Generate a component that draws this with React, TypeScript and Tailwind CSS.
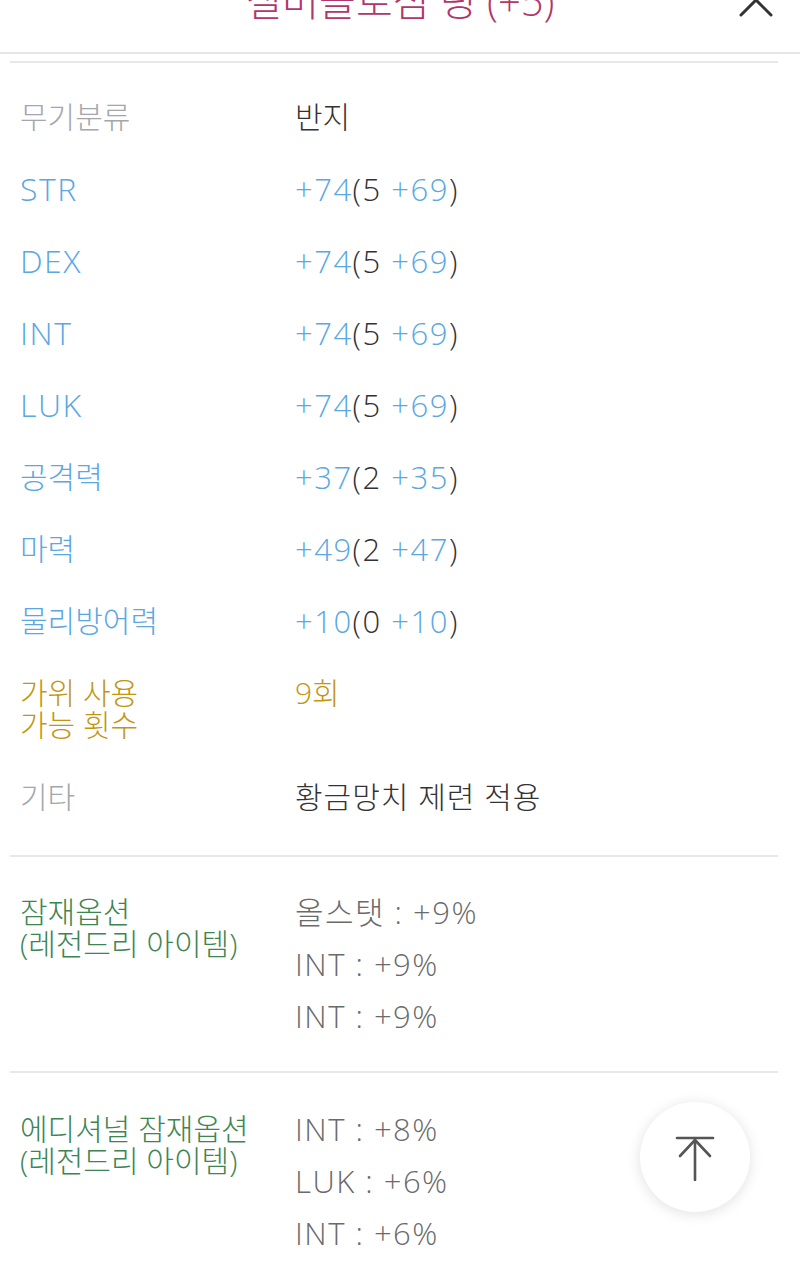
import type { ReactNode } from "react";

type Tone = "muted" | "blue" | "gold";

const labelTone: Record<Tone, string> = {
  muted: "text-[#a3a7ab]",
  blue: "text-[#5aa7e3]",
  gold: "text-[#c4950f]"
};

function StatValue({ total, base, bonus }: { total: string; base: string; bonus: string }) {
  return (
    <>
      <span className="text-[#5aa7e3]">{total}</span>
      <span className="text-[#333]">({base} </span>
      <span className="text-[#5aa7e3]">{bonus}</span>
      <span className="text-[#333]">)</span>
    </>
  );
}

function Row({
  label,
  tone,
  labelClass = "",
  valueClass = "",
  children
}: {
  label: ReactNode;
  tone: Tone;
  labelClass?: string;
  valueClass?: string;
  children: ReactNode;
}) {
  return (
    <div className="grid grid-cols-[275px_1fr] py-5 pl-[10px] leading-8">
      <div className={`${labelTone[tone]} ${labelClass}`}>{label}</div>
      <div className={valueClass}>{children}</div>
    </div>
  );
}

function PotentialSection({ title, lines }: { title: string; lines: string[] }) {
  return (
    <div className="grid grid-cols-[275px_1fr] pl-[10px] leading-8">
      <div className="text-[#3d8551]">
        {title}
        <br />
        (레전드리 아이템)
      </div>
      <div className="flex flex-col gap-5 text-[31px] tracking-[1.5px] text-[#6a6a6a]">
        {lines.map((line, i) => (
          <div key={i}>{line}</div>
        ))}
      </div>
    </div>
  );
}

const stats = [
  { label: "STR", total: "+74", base: "5", bonus: "+69", latin: true },
  { label: "DEX", total: "+74", base: "5", bonus: "+69", latin: true },
  { label: "INT", total: "+74", base: "5", bonus: "+69", latin: true },
  { label: "LUK", total: "+74", base: "5", bonus: "+69", latin: true },
  { label: "공격력", total: "+37", base: "2", bonus: "+35", latin: false },
  { label: "마력", total: "+49", base: "2", bonus: "+47", latin: false },
  { label: "물리방어력", total: "+10", base: "0", bonus: "+10", latin: false }
];

export default function App() {
  return (
    <main className="relative h-[1269px] overflow-hidden bg-white font-['Open_Sans','Noto_Sans_CJK_KR',sans-serif] text-[30px] font-light">
      <header className="relative flex h-[54px] justify-center border-b-2 border-[#e6e6e6]">
        <div className="-mt-[23px] text-[40px] leading-[48px] text-[#b0366c]">
          실버블로섬 링 (+5)
        </div>
        <svg
          className="absolute right-[27px] top-[-17px] h-[34px] w-[34px]"
          viewBox="0 0 34 34"
          fill="none"
          stroke="#333"
          strokeWidth="3"
          strokeLinecap="round"
        >
          <path d="M2 2 L32 32 M32 2 L2 32" />
        </svg>
      </header>

      <div className="ml-[10px] mr-[22px] mt-[7px]">
        <div className="border-t-2 border-[#e8e8e8] pb-[18px]" />

        <Row label="무기분류" tone="muted">
          <span className="text-[#333]">반지</span>
        </Row>
        {stats.map((s) => (
          <Row
            key={s.label}
            label={s.label}
            tone="blue"
            labelClass={s.latin ? "text-[32px] tracking-[1.5px]" : ""}
            valueClass="text-[31px] tracking-[1.5px]"
          >
            <StatValue total={s.total} base={s.base} bonus={s.bonus} />
          </Row>
        ))}
        <Row
          label={
            <>
              가위 사용
              <br />
              가능 횟수
            </>
          }
          tone="gold"
        >
          <span className="text-[#c4950f]">9회</span>
        </Row>
        <Row label="기타" tone="muted" valueClass="tracking-[1px] text-[#333]">
          황금망치 제련 적용
        </Row>

        <div className="mt-[22px] border-t-2 border-[#e8e8e8] pb-[39px] pt-[39px]">
          <PotentialSection title="잠재옵션" lines={["올스탯 : +9%", "INT : +9%", "INT : +9%"]} />
        </div>

        <div className="border-t-2 border-[#e8e8e8] pt-[40px]">
          <PotentialSection
            title="에디셔널 잠재옵션"
            lines={["INT : +8%", "LUK : +6%", "INT : +6%"]}
          />
        </div>
      </div>

      <button className="absolute bottom-[57px] right-[50px] flex h-[110px] w-[110px] items-center justify-center rounded-full bg-white shadow-[0_2px_14px_rgba(0,0,0,0.12)]">
        <svg
          className="h-[48px] w-[48px]"
          viewBox="0 0 48 48"
          fill="none"
          stroke="#555"
          strokeWidth="2.6"
          strokeLinecap="round"
          strokeLinejoin="round"
        >
          <path d="M6 5 H42" />
          <path d="M24 7 V47" />
          <path d="M9 23 L24 7 L39 23" />
        </svg>
      </button>
    </main>
  );
}
